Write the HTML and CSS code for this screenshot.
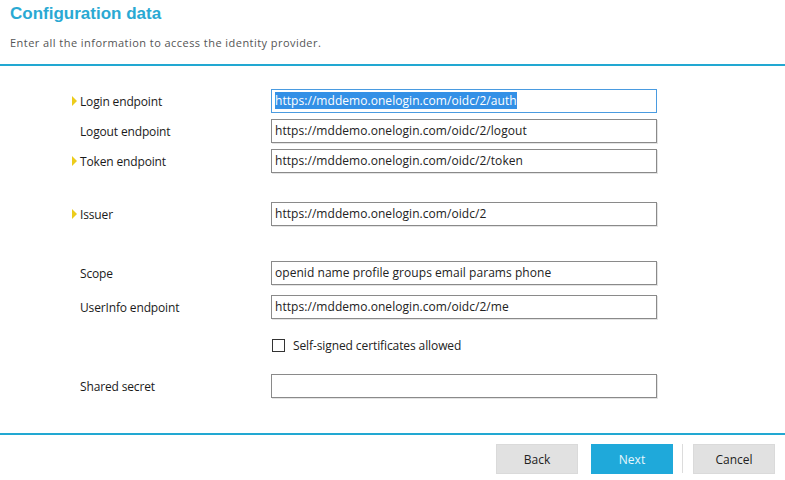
FILE: index.html
```html
<!DOCTYPE html>
<html>

<head>
	<meta charset="utf-8">
	<title>Configuration data</title>
	<link rel="stylesheet" href="styles.css">
</head>

<body>
	<div class="header">
		<h1>Configuration data</h1>
		<p>Enter all the information to access the identity provider.</p>
	</div>
	<div class="form">
		<div class="row required">
			<label>Login endpoint</label>
			<div class="field active"><span class="selected">https://mddemo.onelogin.com/oidc/2/auth</span></div>
		</div>
		<div class="row gap-s">
			<label>Logout endpoint</label>
			<div class="field">https://mddemo.onelogin.com/oidc/2/logout</div>
		</div>
		<div class="row required gap-s">
			<label>Token endpoint</label>
			<div class="field">https://mddemo.onelogin.com/oidc/2/token</div>
		</div>
		<div class="row required gap-l">
			<label>Issuer</label>
			<div class="field">https://mddemo.onelogin.com/oidc/2</div>
		</div>
		<div class="row gap-xl">
			<label>Scope</label>
			<div class="field">openid name profile groups email params phone</div>
		</div>
		<div class="row gap-m">
			<label>UserInfo endpoint</label>
			<div class="field">https://mddemo.onelogin.com/oidc/2/me</div>
		</div>
		<div class="row check-row">
			<label></label>
			<div class="check"><span class="box"></span>Self-signed certificates allowed</div>
		</div>
		<div class="row secret-row">
			<label>Shared secret</label>
			<div class="field"></div>
		</div>
	</div>
	<div class="footer">
		<button type="button">Back</button>
		<button type="button" class="primary">Next</button>
		<span class="sep"></span>
		<button type="button">Cancel</button>
	</div>
</body>

</html>
```

FILE: styles.css
```css
* {
	margin: 0;
	padding: 0;
	box-sizing: border-box;
}

body {
	width: 785px;
	height: 480px;
	background: #fff;
	font-family: "Open Sans", "Noto Sans", sans-serif;
	color: #222;
	overflow: hidden;
}

.header {
	height: 66px;
	padding: 3px 10px 0;
	border-bottom: 2px solid #22a8d2;
}

.header h1 {
	font-family: "Liberation Sans", Arial, sans-serif;
	font-size: 17px;
	line-height: 22px;
	font-weight: bold;
	color: #2aa9d3;
}

.header p {
	margin-top: 11px;
	font-size: 11px;
	letter-spacing: 0.45px;
	line-height: 14px;
	color: #555;
}

.form {
	height: 367px;
	padding-top: 23px;
}

.row {
	display: flex;
	align-items: center;
	height: 24px;
	padding-left: 72px;
}

.row label {
	position: relative;
	width: 199px;
	padding-left: 8px;
	font-size: 12px;
	letter-spacing: -0.15px;
	color: #1a1a1a;
}

.row.required label::before {
	content: "";
	position: absolute;
	left: 0;
	top: 50%;
	margin-top: -5px;
	border-left: 5px solid #eccc1c;
	border-top: 5px solid transparent;
	border-bottom: 5px solid transparent;
}

.gap-s {
	margin-top: 6px;
}

.gap-m {
	margin-top: 10px;
}

.gap-l {
	margin-top: 29px;
}

.gap-xl {
	margin-top: 35px;
}

.check-row {
	margin-top: 14px;
}

.secret-row {
	margin-top: 17px;
}

.field {
	width: 386px;
	height: 24px;
	padding: 0 3px;
	border: 1px solid #8a8a8a;
	box-shadow: 1px 1px 0 #e4e4e4;
	font-size: 12px;
	letter-spacing: 0.05px;
	line-height: 22px;
	color: #222;
	white-space: nowrap;
	overflow: hidden;
}

.field.active {
	border-color: #4a9be0;
	box-shadow: none;
}

.selected {
	background: #3390e6;
	color: #fff;
}

.check {
	display: flex;
	align-items: center;
	font-size: 12px;
	letter-spacing: -0.1px;
	color: #222;
	padding-left: 1px;
}

.check .box {
	width: 13px;
	height: 13px;
	border: 1px solid #333;
	margin-right: 8px;
}

.footer {
	display: flex;
	align-items: flex-start;
	height: 47px;
	padding: 9px 10px 0 0;
	justify-content: flex-end;
	border-top: 2px solid #22a8d2;
}

.footer button {
	width: 82px;
	height: 30px;
	margin-left: 13px;
	border: 1px solid #dadada;
	background: #e1e1e1;
	font-family: "Open Sans", "Noto Sans", sans-serif;
	font-size: 12px;
	color: #222;
}

.footer button.primary {
	background: #1fa9da;
	border-color: #1fa9da;
	color: #e8f7fc;
}

.footer .sep {
	width: 1px;
	height: 29px;
	margin-left: 9px;
	margin-right: -3px;
	background: #dcdcdc;
}
```
